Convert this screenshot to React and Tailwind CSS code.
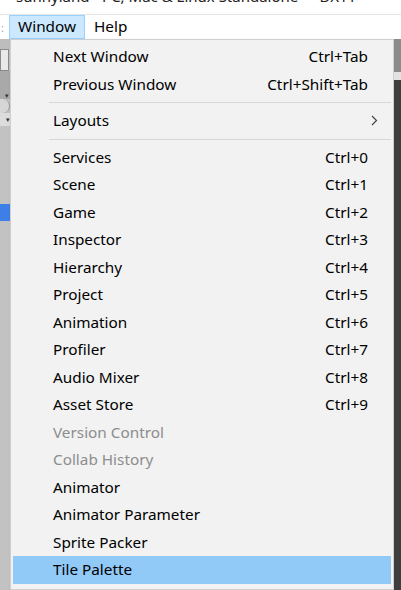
import React from 'react';

const items = [
  { label: 'Next Window', shortcut: 'Ctrl+Tab' },
  { label: 'Previous Window', shortcut: 'Ctrl+Shift+Tab' },
  { sep: true },
  { label: 'Layouts', submenu: true },
  { sep: true },
  { label: 'Services', shortcut: 'Ctrl+0' },
  { label: 'Scene', shortcut: 'Ctrl+1' },
  { label: 'Game', shortcut: 'Ctrl+2' },
  { label: 'Inspector', shortcut: 'Ctrl+3' },
  { label: 'Hierarchy', shortcut: 'Ctrl+4' },
  { label: 'Project', shortcut: 'Ctrl+5' },
  { label: 'Animation', shortcut: 'Ctrl+6' },
  { label: 'Profiler', shortcut: 'Ctrl+7' },
  { label: 'Audio Mixer', shortcut: 'Ctrl+8' },
  { label: 'Asset Store', shortcut: 'Ctrl+9' },
  { label: 'Version Control', disabled: true },
  { label: 'Collab History', disabled: true },
  { label: 'Animator' },
  { label: 'Animator Parameter' },
  { label: 'Sprite Packer' },
  { label: 'Tile Palette', active: true },
  { label: 'Lighting' },
];

function MenuItem({ item }) {
  if (item.sep) {
    return (
      <div className="h-[9px] shrink-0 flex items-center pl-[36px]">
        <div className="h-px w-full bg-[#d7d7d7]" />
      </div>
    );
  }
  return (
    <div
      className={
        'h-[27.5px] shrink-0 flex items-center pl-[40px] pr-[23px] ' +
        (item.active ? 'bg-[#91c9f7]' : '') +
        (item.disabled ? ' text-[#8d8d8d]' : ' text-black')
      }
    >
      <span className="flex-1">{item.label}</span>
      {item.shortcut && <span>{item.shortcut}</span>}
      {item.submenu && (
        <svg width="7" height="11" viewBox="0 0 7 11" className="-mr-[10px]">
          <path d="M1 1l4.5 4.5L1 10" fill="none" stroke="#444" strokeWidth="1.2" />
        </svg>
      )}
    </div>
  );
}

export default function App() {
  return (
    <div
      className="w-[401px] h-[590px] overflow-hidden bg-white text-[15.3px] leading-none"
      style={{ fontFamily: '"Noto Sans", "Liberation Sans", sans-serif' }}
    >
      {/* title bar, cut off at top */}
      <div className="h-[15px] overflow-hidden border-b border-[#e5e5e5]">
        <div className="-mt-[15px] pl-[16px] text-[15px] leading-[22px] text-[#222] whitespace-nowrap">
          sunnyland - PC, Mac &amp; Linux Standalone - &lt;DX11&gt;
        </div>
      </div>

      {/* menubar */}
      <div className="h-[24px] flex items-stretch">
        <div className="w-[9px] text-[#9ab] text-[11px] flex items-center pl-[1px]">:</div>
        <div className="w-[76px] bg-[#cce8ff] border border-[#99d1ff] flex items-center justify-center text-black">
          Window
        </div>
        <div className="px-[9px] flex items-center text-black">Help</div>
      </div>

      {/* body */}
      <div className="flex h-[551px]">
        {/* left unity strip */}
        <div className="w-[10px] bg-[#c2c2c2] flex flex-col">
          <div className="h-[10px] bg-[#bdbdbd]" />
          <div className="h-[22px] bg-[#e9e9e9] border border-[#8a8a8a] mr-[1px]" />
          <div className="h-[28px] bg-[#a9a9a9] flex items-end justify-end pr-[1px] text-[7px] text-[#333]">▾</div>
          <div className="h-[14px] bg-[#d6d6d6] rounded-r-full border-r border-[#999]" />
          <div className="h-[13px] bg-[#dcdcdc] flex items-center justify-end text-[7px] text-[#333]">▾</div>
          <div className="h-[78px] bg-[#c2c2c2]" />
          <div className="h-[17px] bg-[#3d7fe6]" />
          <div className="flex-1 bg-[#c2c2c2]" />
        </div>

        {/* menu */}
        <div className="w-[384px] bg-[#f2f2f2] border border-[#cfcfcf] shadow-[2px_2px_3px_rgba(0,0,0,0.35)] pt-[3px] px-[2px] flex flex-col overflow-hidden">
          {items.map((item, i) => (
            <MenuItem key={i} item={item} />
          ))}
        </div>

        {/* right unity strip */}
        <div className="flex-1 flex flex-col">
          <div className="h-[33px] bg-[#8b8b8b]" />
          <div className="h-[8px] bg-[#e2e2e2]" />
          <div className="flex-1 bg-[#3e3e3e]" />
        </div>
      </div>
    </div>
  );
}
